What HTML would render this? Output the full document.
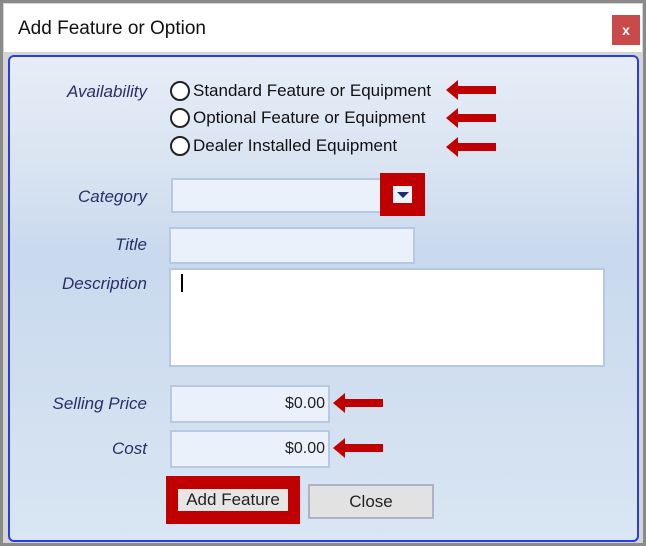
<!DOCTYPE html>
<html><head><style>
*{margin:0;padding:0;box-sizing:border-box}
body{width:646px;height:546px;background:#8a8a8a;position:relative;overflow:hidden;font-family:"Liberation Sans",sans-serif}
.win{position:absolute;left:3px;top:3px;width:640px;height:540px;background:#d4d4d4}
.title{position:absolute;left:4px;top:4px;width:638px;height:48px;background:#fff}
.title span{position:absolute;left:14px;top:14px;font-size:19px;color:#111}
.x{position:absolute;left:612px;top:15px;width:28px;height:30px;background:#c94a4a;color:#fff;font-size:14px;font-weight:bold;text-align:center;line-height:30px}
.panel{position:absolute;left:8px;top:55px;width:631px;height:487px;border:2px solid #2a3ee0;border-radius:6px;background:linear-gradient(#e6edf7 0%,#d8e3f1 25%,#c9d9ee 40%,#d2e0f0 75%,#d9e6f3 100%)}
.lbl{position:absolute;font-style:italic;color:#2a2f6a;font-size:17px;text-align:right;width:130px;left:17px}
.rad{position:absolute;left:170px;font-size:17px;color:#111;display:flex;align-items:center}
.rad i{display:inline-block;width:20px;height:20px;border:2px solid #222;border-radius:50%;background:#fff;margin-right:3px}
.box{position:absolute;background:#eaf1fb;border:2px solid #b7c8e2}
.arr{position:absolute;width:50px;height:20px}
.red{position:absolute;background:#c00000}
.val{font-size:16px;color:#222;text-align:right;padding-right:3px;line-height:34px}
</style></head><body>
<div class="win"></div>
<div class="title"><span>Add Feature or Option</span></div>
<div class="x">x</div>
<div class="panel"></div>
<div class="lbl" style="top:82px">Availability</div>
<div class="rad" style="top:81px"><i></i>Standard Feature or Equipment</div>
<div class="rad" style="top:108px"><i></i>Optional Feature or Equipment</div>
<div class="rad" style="top:136px"><i></i>Dealer Installed Equipment</div>
<svg class="arr" style="left:446px;top:80px" viewBox="0 0 50 20"><path d="M0 10 L12 0 V6 H50 V14 H12 V20Z" fill="#c00000"/></svg>
<svg class="arr" style="left:446px;top:108px" viewBox="0 0 50 20"><path d="M0 10 L12 0 V6 H50 V14 H12 V20Z" fill="#c00000"/></svg>
<svg class="arr" style="left:446px;top:137px" viewBox="0 0 50 20"><path d="M0 10 L12 0 V6 H50 V14 H12 V20Z" fill="#c00000"/></svg>
<div class="lbl" style="top:187px">Category</div>
<div class="box" style="left:171px;top:178px;width:214px;height:35px"></div>
<div class="red" style="left:380px;top:173px;width:45px;height:43px"><div style="position:absolute;left:13px;top:13px;width:19px;height:17px;background:#eef2fa"><div style="position:absolute;left:4px;top:6px;border-left:6px solid transparent;border-right:6px solid transparent;border-top:6px solid #1a2a7a"></div></div></div>
<div class="lbl" style="top:235px">Title</div>
<div class="box" style="left:169px;top:227px;width:246px;height:37px"></div>
<div class="lbl" style="top:274px">Description</div>
<div class="box" style="left:169px;top:268px;width:436px;height:99px;background:#fff"><div style="position:absolute;left:10px;top:4px;width:2px;height:18px;background:#000"></div></div>
<div class="lbl" style="top:394px">Selling Price</div>
<div class="box val" style="left:170px;top:385px;width:160px;height:38px">$0.00</div>
<svg class="arr" style="left:333px;top:393px" viewBox="0 0 50 20"><path d="M0 10 L12 0 V6 H50 V14 H12 V20Z" fill="#c00000"/></svg>
<div class="lbl" style="top:439px">Cost</div>
<div class="box val" style="left:170px;top:430px;width:160px;height:38px">$0.00</div>
<svg class="arr" style="left:333px;top:438px" viewBox="0 0 50 20"><path d="M0 10 L12 0 V6 H50 V14 H12 V20Z" fill="#c00000"/></svg>
<div class="red" style="left:166px;top:476px;width:134px;height:48px"><div style="position:absolute;left:12px;top:13px;width:110px;height:22px;background:#e6e6e6;font-size:17px;color:#222;text-align:center;line-height:22px">Add Feature</div></div>
<div style="position:absolute;left:308px;top:484px;width:126px;height:35px;background:#e2e2e2;border:2px solid #b0b0c8;font-size:17px;color:#222;text-align:center;line-height:31px">Close</div>
</body></html>
